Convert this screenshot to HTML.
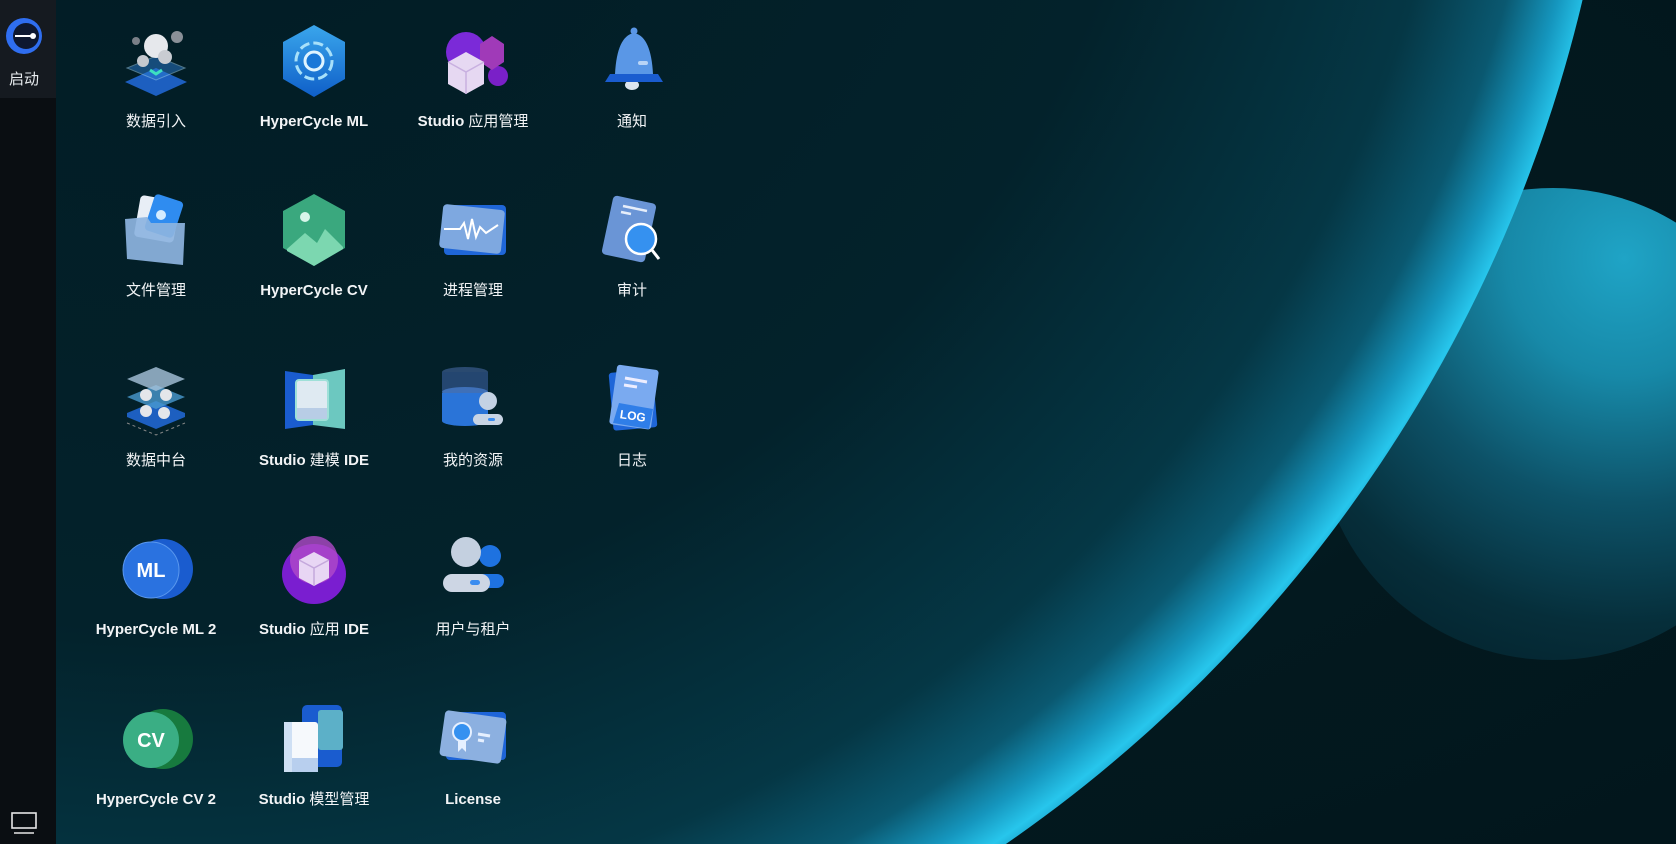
<!DOCTYPE html>
<html><head><meta charset="utf-8"><style>
*{margin:0;padding:0;box-sizing:border-box}
html,body{width:1676px;height:844px;overflow:hidden;background:#031a21;font-family:"Liberation Sans","Noto Sans CJK SC",sans-serif}
#wrap{position:absolute;left:0;top:0;width:1676px;height:844px;overflow:hidden}
.bg{position:absolute;left:0;top:0;width:1676px;height:844px;background:radial-gradient(ellipse at 30% 40%,#062730 0%,#03191f 60%,#02161c 100%)}
.small{position:absolute;left:1317px;top:188px;width:472px;height:472px;border-radius:50%;
background:radial-gradient(circle 470px at 65% 15%,#1fa4c6 0%,#1789a8 25%,#0d5268 52%,#062e3a 78%,#03202a 100%)}
.big{position:absolute;left:-1231px;top:-1755px;width:2852px;height:2852px;border-radius:50%;
background:radial-gradient(circle 1480px at 49% 48.5%,#021a22 0px,#03222b 1000px,#053745 1300px,#0a5870 1390px,#1596be 1440px,#27c6ec 1470px,#1fb0d8 1480px)}
.side{position:absolute;left:0;top:0;width:56px;height:844px;background:#0a0e12}
.sidetop{position:absolute;left:0;top:0;width:56px;height:98px;background:#151a20}
.logo{position:absolute;left:5px;top:17px}
.st{position:absolute;left:0;top:68px;width:48px;text-align:center;color:#e8ecef;font-size:15px}
.mon{position:absolute;left:11px;top:812px}
.item{position:absolute;width:160px;height:110px;text-align:center;color:#f2f4f6;font-size:15px}
.item svg{display:block;margin:0 auto}
.item .l{position:absolute;left:0;width:160px;top:88px;line-height:20px}
.b{font-weight:bold}
</style></head><body><div id="wrap">
<div class="bg"></div>
<div class="small"></div>
<div class="big"></div>
<div class="side"><div class="sidetop"></div>
<svg class="logo" width="38" height="38" viewBox="0 0 38 38"><circle cx="19" cy="19" r="18" fill="#2f6ef0"/><circle cx="21" cy="19" r="13" fill="#0e1830"/><path d="M10 19 H28" stroke="#fff" stroke-width="2"/><circle cx="28" cy="19" r="3" fill="#fff"/></svg>
<div class="st">启动</div>
<svg class="mon" width="26" height="24" viewBox="0 0 26 24"><rect x="1" y="1" width="24" height="15" fill="none" stroke="#e6e6e6" stroke-width="1.6"/><path d="M3 21 H23" stroke="#e6e6e6" stroke-width="1.6"/></svg>
</div>

<div class="item" style="left:76px;top:24px"><svg width="74" height="74" viewBox="0 0 74 74"><path d="M6 58 L37 44 L68 58 L37 72Z" fill="#1d5fc0"/><path d="M8 44 L37 32 L66 44 L37 56Z" fill="#2a7bd0" opacity=".5" stroke="#9bd0ee" stroke-width="1"/><path d="M31 46 L37 50 L43 46" stroke="#3de0c0" stroke-width="3" fill="none"/><circle cx="37" cy="22" r="12" fill="#e6e8ec"/><circle cx="46" cy="33" r="7" fill="#c9ccd2"/><circle cx="24" cy="37" r="6" fill="#c5c8ce"/><circle cx="58" cy="13" r="6" fill="#8a9098"/><circle cx="17" cy="17" r="4" fill="#7b8088"/></svg><div class="l">数据引入</div></div>
<div class="item b" style="left:234px;top:24px"><svg width="74" height="74" viewBox="0 0 74 74"><defs><linearGradient id="g1" x1="0" y1="0" x2="0" y2="1"><stop offset="0" stop-color="#3aa6ec"/><stop offset="1" stop-color="#0f5fc8"/></linearGradient></defs><path d="M37 1 L68 18 L68 55 L37 73 L6 55 L6 18Z" fill="url(#g1)"/><circle cx="37" cy="37" r="18" fill="none" stroke="#a7e0fa" stroke-width="3" stroke-dasharray="10 4"/><circle cx="37" cy="37" r="9" fill="#1978d8" stroke="#dff4ff" stroke-width="3"/></svg><div class="l">HyperCycle ML</div></div>
<div class="item" style="left:393px;top:24px"><svg width="74" height="74" viewBox="0 0 74 74"><circle cx="30" cy="28" r="20" fill="#7b2ad8"/><circle cx="62" cy="52" r="10" fill="#7a20c8"/><path d="M56 12 L68 20 L68 38 L56 46 L44 38 L44 20Z" fill="#a03ab8"/><path d="M30 28 L48 38 L48 60 L30 70 L12 60 L12 38Z" fill="#e6d8f2"/><path d="M12 38 L30 48 L48 38 M30 48 V70" stroke="#c8b0e0" stroke-width="1.5" fill="none"/></svg><div class="l"><b>Studio</b> 应用管理</div></div>
<div class="item" style="left:552px;top:24px"><svg width="74" height="74" viewBox="0 0 74 74"><ellipse cx="37" cy="61" rx="7" ry="5" fill="#dce4ee"/><circle cx="39" cy="7" r="3.5" fill="#5a96e6"/><path d="M20 50 Q22 12 39 9 Q56 12 58 50 L66 56 Q39 56 12 56Z" fill="#5a97e6"/><path d="M15 50 L63 50 L68 58 L10 58Z" fill="#1a5ccf"/><rect x="43" y="37" width="10" height="4" rx="2" fill="#b9d4f6"/></svg><div class="l">通知</div></div>

<div class="item" style="left:76px;top:193px"><svg width="74" height="74" viewBox="0 0 74 74"><rect x="18" y="5" width="40" height="42" rx="4" fill="#e8eef6" transform="rotate(10 38 26)"/><rect x="30" y="4" width="30" height="38" rx="4" fill="#2f8cf0" transform="rotate(18 45 23)"/><circle cx="42" cy="22" r="5" fill="#d5ecff"/><path d="M6 26 L28 24 L32 30 L66 30 L64 72 L8 66Z" fill="#8db4e0" opacity=".92"/></svg><div class="l">文件管理</div></div>
<div class="item b" style="left:234px;top:193px"><svg width="74" height="74" viewBox="0 0 74 74"><path d="M37 1 L68 18 L68 55 L37 73 L6 55 L6 18Z" fill="#3aa87e"/><circle cx="28" cy="24" r="5" fill="#d8f6ea"/><path d="M10 56 L28 40 L40 50 L48 36 L66 54 L66 56 L37 73 L10 58Z" fill="#7cd7b0"/></svg><div class="l">HyperCycle CV</div></div>
<div class="item" style="left:393px;top:193px"><svg width="74" height="74" viewBox="0 0 74 74"><rect x="8" y="12" width="62" height="50" rx="4" fill="#1f66d8"/><rect x="5" y="14" width="62" height="44" rx="4" fill="#7ea8e0" transform="rotate(6 36 36)"/><path d="M8 36 L24 36 L28 30 L32 46 L36 26 L40 44 L44 34 L50 40 L62 32" stroke="#fff" stroke-width="2" fill="none"/></svg><div class="l">进程管理</div></div>
<div class="item" style="left:552px;top:193px"><svg width="74" height="74" viewBox="0 0 74 74"><rect x="12" y="6" width="44" height="60" rx="4" fill="#6a95d6" transform="rotate(12 34 36)"/><path d="M28 13 L52 18 M26 19 L36 21" stroke="#e6eefa" stroke-width="2.5"/><circle cx="46" cy="46" r="15" fill="#3591f0" stroke="#fff" stroke-width="2.5"/><path d="M57 57 L64 66" stroke="#fff" stroke-width="3"/></svg><div class="l">审计</div></div>

<div class="item" style="left:76px;top:363px"><svg width="74" height="74" viewBox="0 0 74 74"><path d="M8 50 L37 38 L66 50 L66 54 L37 66 L8 54Z" fill="#1d5fc0"/><path d="M8 50 L37 62 L66 50" stroke="#888" stroke-dasharray="3 3" fill="none" transform="translate(0 10)"/><path d="M8 34 L37 22 L66 34 L37 46Z" fill="#4a9ad0" opacity=".8"/><path d="M8 16 L37 4 L66 16 L37 28Z" fill="#a9c4dc" opacity=".8"/><circle cx="27" cy="32" r="6" fill="#e4e6ea"/><circle cx="47" cy="32" r="6" fill="#e4e6ea"/><circle cx="27" cy="48" r="6" fill="#e4e6ea"/><circle cx="45" cy="50" r="6" fill="#e4e6ea"/></svg><div class="l">数据中台</div></div>
<div class="item" style="left:234px;top:363px"><svg width="74" height="74" viewBox="0 0 74 74"><path d="M8 8 L36 12 L36 62 L8 66Z" fill="#1a5ccf"/><path d="M36 12 L68 6 L68 66 L36 62Z" fill="#6cc8c0"/><rect x="19" y="17" width="32" height="40" rx="3" fill="#dfeaf2" stroke="#9fe0d8" stroke-width="2"/><rect x="20" y="45" width="30" height="11" fill="#b8cde6"/></svg><div class="l"><b>Studio</b> 建模 <b>IDE</b></div></div>
<div class="item" style="left:393px;top:363px"><svg width="74" height="74" viewBox="0 0 74 74"><ellipse cx="29" cy="9" rx="23" ry="5" fill="#2a4a70"/><rect x="6" y="9" width="46" height="20" fill="#244670"/><ellipse cx="29" cy="29" rx="23" ry="5" fill="#3f70b8"/><rect x="6" y="30" width="46" height="28" fill="#2a74d8"/><ellipse cx="29" cy="58" rx="23" ry="5" fill="#2a74d8"/><circle cx="52" cy="38" r="9" fill="#c4d2e4"/><rect x="37" y="51" width="30" height="11" rx="5.5" fill="#c8d4e4"/><rect x="52" y="55" width="7" height="3" rx="1.5" fill="#3a8cf0"/></svg><div class="l">我的资源</div></div>
<div class="item" style="left:552px;top:363px"><svg width="74" height="74" viewBox="0 0 74 74"><rect x="16" y="8" width="44" height="58" rx="3" fill="#1f66d8" transform="rotate(-5 38 37)"/><rect x="18" y="4" width="42" height="60" rx="3" fill="#7aaaf0" transform="rotate(8 38 34)"/><path d="M24 40 L58 46 L54 66 L18 60Z" fill="#2f7ee8"/><path d="M30 15 L52 19 M29 22 L42 24" stroke="#eef" stroke-width="3"/><text x="25" y="57" font-size="12" font-weight="bold" fill="#fff" font-family="Liberation Sans" transform="rotate(8 38 52)">LOG</text></svg><div class="l">日志</div></div>

<div class="item b" style="left:76px;top:532px"><svg width="74" height="74" viewBox="0 0 74 74"><circle cx="44" cy="37" r="30" fill="#1a5ccf"/><circle cx="32" cy="38" r="28" fill="#2a72e0" stroke="#5a98ee" stroke-width="1"/><text x="32" y="45" font-size="20" fill="#fff" text-anchor="middle" font-family="Liberation Sans">ML</text></svg><div class="l">HyperCycle ML 2</div></div>
<div class="item" style="left:234px;top:532px"><svg width="74" height="74" viewBox="0 0 74 74"><ellipse cx="37" cy="42" rx="32" ry="30" fill="#7a1ed0"/><circle cx="37" cy="28" r="24" fill="#b04ac8" opacity=".8"/><path d="M37 20 L52 28 L52 46 L37 54 L22 46 L22 28Z" fill="#e8d6f4"/><path d="M22 28 L37 36 L52 28 M37 36 V54" stroke="#c4a8dc" stroke-width="1.5" fill="none"/></svg><div class="l"><b>Studio</b> 应用 <b>IDE</b></div></div>
<div class="item" style="left:393px;top:532px"><svg width="74" height="74" viewBox="0 0 74 74"><circle cx="54" cy="24" r="11" fill="#1e72e0"/><rect x="40" y="42" width="28" height="14" rx="7" fill="#1e72e0"/><circle cx="30" cy="20" r="15" fill="#c4d0e0"/><rect x="7" y="42" width="47" height="18" rx="9" fill="#cdd6e4"/><rect x="34" y="48" width="10" height="5" rx="2.5" fill="#3a8cf0"/></svg><div class="l">用户与租户</div></div>

<div class="item b" style="left:76px;top:702px"><svg width="74" height="74" viewBox="0 0 74 74"><circle cx="44" cy="37" r="30" fill="#177a3e"/><circle cx="32" cy="38" r="28" fill="#3aae84"/><text x="32" y="45" font-size="20" fill="#fff" text-anchor="middle" font-family="Liberation Sans">CV</text></svg><div class="l">HyperCycle CV 2</div></div>
<div class="item" style="left:234px;top:702px"><svg width="74" height="74" viewBox="0 0 74 74"><rect x="25" y="3" width="40" height="62" rx="5" fill="#1a5ccf"/><rect x="41" y="8" width="25" height="40" rx="3" fill="#5cb0c8"/><rect x="7" y="20" width="34" height="50" rx="3" fill="#f6f9fc"/><rect x="7" y="56" width="34" height="14" fill="#b8cfee"/><rect x="7" y="20" width="8" height="50" fill="#cfe0f4"/></svg><div class="l"><b>Studio</b> 模型管理</div></div>
<div class="item b" style="left:393px;top:702px"><svg width="74" height="74" viewBox="0 0 74 74"><rect x="10" y="10" width="60" height="48" rx="4" fill="#1e64d8"/><rect x="6" y="12" width="62" height="46" rx="4" fill="#8cb0e0" transform="rotate(8 37 35)"/><circle cx="26" cy="30" r="9" fill="#3591f0" stroke="#e6f0ff" stroke-width="2"/><path d="M22 38 L22 50 L26 46 L30 50 L30 38" fill="#e6f0ff"/><path d="M42 32 L54 34 M42 38 L48 39" stroke="#e6f0ff" stroke-width="3"/></svg><div class="l">License</div></div>
</div></body></html>
